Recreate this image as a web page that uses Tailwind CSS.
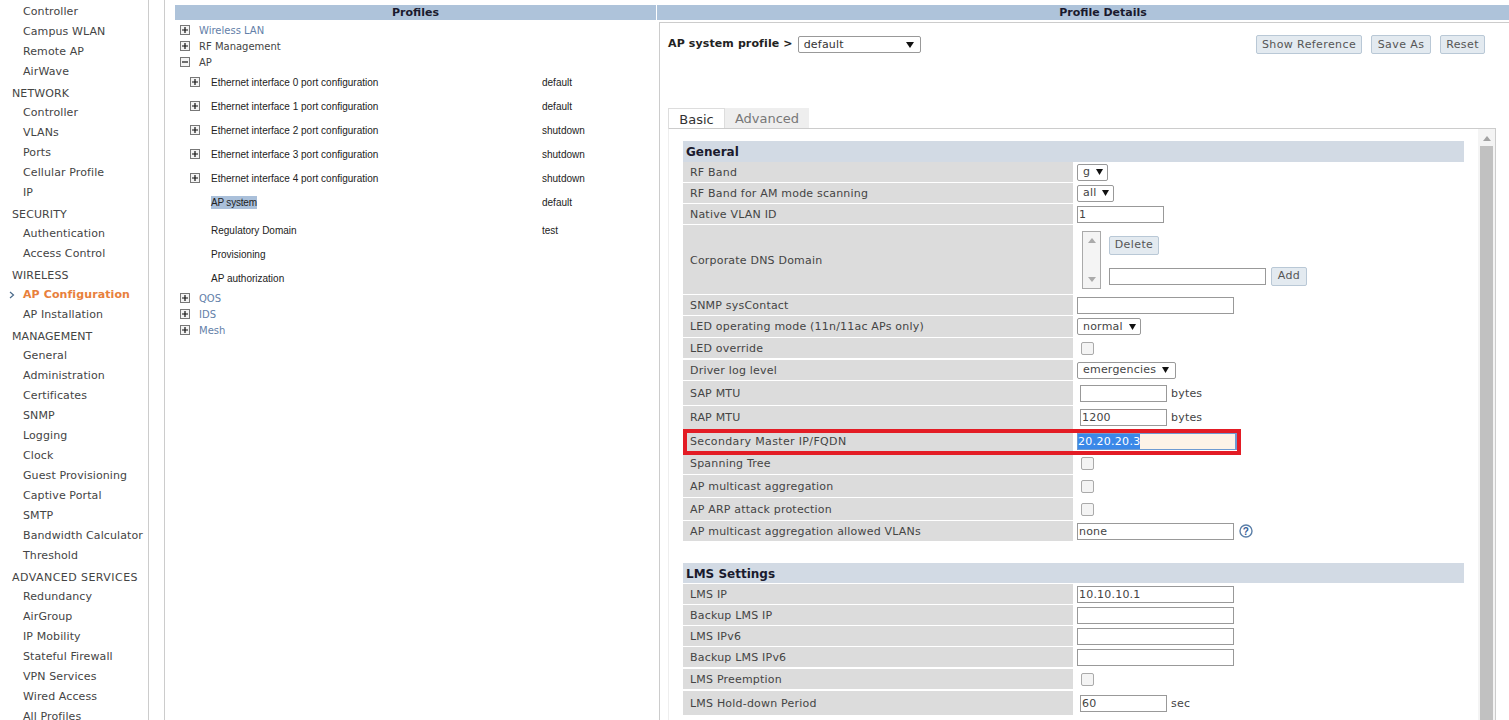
<!DOCTYPE html>
<html lang="en">
<head>
    <meta charset="UTF-8">
    <title>AP Configuration</title>
    <script src="https://cdn.jsdelivr.net/npm/@tailwindcss/browser@4"></script>
</head>
<body class="bg-white overflow-hidden font-['DejaVu_Sans',sans-serif] text-[11px] text-[#333]">
<div class="flex h-[720px] w-[1509px] overflow-hidden">

    <!-- Left navigation -->
    <nav class="w-[149px] shrink-0 border-r border-[#ccc] pt-[2px] pl-3 text-[#444] tracking-[.1px]">
        <div class="pl-[11px]">
            <div class="h-5 leading-5">Controller</div>
            <div class="h-5 leading-5">Campus WLAN</div>
            <div class="h-5 leading-5">Remote AP</div>
            <div class="h-5 leading-5">AirWave</div>
        </div>
        <div class="h-[21px] pt-[2px] leading-5">NETWORK</div>
        <div class="pl-[11px]">
            <div class="h-5 leading-5">Controller</div>
            <div class="h-5 leading-5">VLANs</div>
            <div class="h-5 leading-5">Ports</div>
            <div class="h-5 leading-5">Cellular Profile</div>
            <div class="h-5 leading-5">IP</div>
        </div>
        <div class="h-[21px] pt-[2px] leading-5">SECURITY</div>
        <div class="pl-[11px]">
            <div class="h-5 leading-5">Authentication</div>
            <div class="h-5 leading-5">Access Control</div>
        </div>
        <div class="h-[21px] pt-[2px] leading-5">WIRELESS</div>
        <div class="pl-[11px]">
            <div class="relative h-5 leading-5 font-bold text-[#e8803c]">
                <svg class="absolute left-[-14px] top-[6px]" width="6" height="8" viewBox="0 0 6 8" fill="none" stroke="#4a6a8a" stroke-width="1.2"><path d="M1 1l3.5 3L1 7"/></svg>
                AP Configuration
            </div>
            <div class="h-5 leading-5">AP Installation</div>
        </div>
        <div class="h-[21px] pt-[2px] leading-5">MANAGEMENT</div>
        <div class="pl-[11px]">
            <div class="h-5 leading-5">General</div>
            <div class="h-5 leading-5">Administration</div>
            <div class="h-5 leading-5">Certificates</div>
            <div class="h-5 leading-5">SNMP</div>
            <div class="h-5 leading-5">Logging</div>
            <div class="h-5 leading-5">Clock</div>
            <div class="h-5 leading-5">Guest Provisioning</div>
            <div class="h-5 leading-5">Captive Portal</div>
            <div class="h-5 leading-5">SMTP</div>
            <div class="h-5 leading-5">Bandwidth Calculator</div>
            <div class="h-5 leading-5">Threshold</div>
        </div>
        <div class="h-[21px] pt-[2px] leading-5 tracking-[.45px]">ADVANCED SERVICES</div>
        <div class="pl-[11px]">
            <div class="h-5 leading-5">Redundancy</div>
            <div class="h-5 leading-5">AirGroup</div>
            <div class="h-5 leading-5">IP Mobility</div>
            <div class="h-5 leading-5">Stateful Firewall</div>
            <div class="h-5 leading-5">VPN Services</div>
            <div class="h-5 leading-5">Wired Access</div>
            <div class="h-5 leading-5">All Profiles</div>
        </div>
    </nav>
    <div class="w-4 shrink-0 border-r border-[#ccc]"></div>

    <main class="flex flex-1 pl-[10px] pt-[5px] min-w-0">

        <!-- Profiles tree -->
        <section class="w-[481px] shrink-0 mr-px">
            <h2 class="h-[15px] bg-[#aec3da] text-center text-[11px] leading-[16px] font-bold text-[#1a1a2e]">Profiles</h2>
            <div class="pt-[2px] pl-[5px] text-[10px] text-[#444]">
                <div class="flex items-center h-4"><svg class="mr-[9px]" width="10" height="10" viewBox="0 0 10 10"><rect x=".5" y=".5" width="9" height="9" fill="#f4f4f4" stroke="#777"/><path d="M2 5h6M5 2v6" stroke="#111" stroke-width="1.2"/></svg><span class="text-[#6380a8]">Wireless LAN</span></div>
                <div class="flex items-center h-4"><svg class="mr-[9px]" width="10" height="10" viewBox="0 0 10 10"><rect x=".5" y=".5" width="9" height="9" fill="#f4f4f4" stroke="#777"/><path d="M2 5h6M5 2v6" stroke="#111" stroke-width="1.2"/></svg>RF Management</div>
                <div class="flex items-center h-4"><svg class="mr-[9px]" width="10" height="10" viewBox="0 0 10 10"><rect x=".5" y=".5" width="9" height="9" fill="#f4f4f4" stroke="#777"/><path d="M2 5h6" stroke="#111" stroke-width="1.2"/></svg>AP</div>

                <div class="pl-[10px] font-['Liberation_Sans',sans-serif] text-[10px] text-[#222]">
                    <div class="flex items-center h-6"><svg class="mr-[11px]" width="10" height="10" viewBox="0 0 10 10"><rect x=".5" y=".5" width="9" height="9" fill="#f4f4f4" stroke="#777"/><path d="M2 5h6M5 2v6" stroke="#111" stroke-width="1.2"/></svg><span class="w-[331px]">Ethernet interface 0 port configuration</span><span>default</span></div>
                    <div class="flex items-center h-6"><svg class="mr-[11px]" width="10" height="10" viewBox="0 0 10 10"><rect x=".5" y=".5" width="9" height="9" fill="#f4f4f4" stroke="#777"/><path d="M2 5h6M5 2v6" stroke="#111" stroke-width="1.2"/></svg><span class="w-[331px]">Ethernet interface 1 port configuration</span><span>default</span></div>
                    <div class="flex items-center h-6"><svg class="mr-[11px]" width="10" height="10" viewBox="0 0 10 10"><rect x=".5" y=".5" width="9" height="9" fill="#f4f4f4" stroke="#777"/><path d="M2 5h6M5 2v6" stroke="#111" stroke-width="1.2"/></svg><span class="w-[331px]">Ethernet interface 2 port configuration</span><span>shutdown</span></div>
                    <div class="flex items-center h-6"><svg class="mr-[11px]" width="10" height="10" viewBox="0 0 10 10"><rect x=".5" y=".5" width="9" height="9" fill="#f4f4f4" stroke="#777"/><path d="M2 5h6M5 2v6" stroke="#111" stroke-width="1.2"/></svg><span class="w-[331px]">Ethernet interface 3 port configuration</span><span>shutdown</span></div>
                    <div class="flex items-center h-6"><svg class="mr-[11px]" width="10" height="10" viewBox="0 0 10 10"><rect x=".5" y=".5" width="9" height="9" fill="#f4f4f4" stroke="#777"/><path d="M2 5h6M5 2v6" stroke="#111" stroke-width="1.2"/></svg><span class="w-[331px]">Ethernet interface 4 port configuration</span><span>shutdown</span></div>
                    <div class="flex items-center h-6 pl-[21px]"><span class="w-[331px]"><span class="bg-[#aac0da] py-px tracking-[-.2px]">AP system</span></span><span>default</span></div>
                    <div class="flex items-center h-6 pl-[21px] mt-1"><span class="w-[331px]">Regulatory Domain</span><span>test</span></div>
                    <div class="flex items-center h-6 pl-[21px]">Provisioning</div>
                    <div class="flex items-center h-6 pl-[21px]">AP authorization</div>
                </div>

                <div class="flex items-center h-4"><svg class="mr-[9px]" width="10" height="10" viewBox="0 0 10 10"><rect x=".5" y=".5" width="9" height="9" fill="#f4f4f4" stroke="#777"/><path d="M2 5h6M5 2v6" stroke="#111" stroke-width="1.2"/></svg><span class="text-[#6380a8]">QOS</span></div>
                <div class="flex items-center h-4"><svg class="mr-[9px]" width="10" height="10" viewBox="0 0 10 10"><rect x=".5" y=".5" width="9" height="9" fill="#f4f4f4" stroke="#777"/><path d="M2 5h6M5 2v6" stroke="#111" stroke-width="1.2"/></svg><span class="text-[#6380a8]">IDS</span></div>
                <div class="flex items-center h-4"><svg class="mr-[9px]" width="10" height="10" viewBox="0 0 10 10"><rect x=".5" y=".5" width="9" height="9" fill="#f4f4f4" stroke="#777"/><path d="M2 5h6M5 2v6" stroke="#111" stroke-width="1.2"/></svg><span class="text-[#6380a8]">Mesh</span></div>
            </div>
        </section>

        <!-- Profile details -->
        <section class="flex-1 min-w-0 flex flex-col">
            <h2 class="h-[15px] shrink-0 bg-[#aec3da] pl-10 text-center text-[11px] leading-[16px] font-bold text-[#1a1a2e]">Profile Details</h2>
            <div class="flex-1 mt-[2px] ml-[2px] border-t border-l border-[#ccc] pl-2 min-h-0">

                <div class="flex items-start justify-between h-[85px] pt-[13px] pr-6">
                    <div class="flex items-center">
                        <span class="font-bold text-[#222] mr-[5px] tracking-[.12px]">AP system profile &gt;</span>
                        <div class="flex items-center justify-between w-[123px] h-[17px] border border-[#999] rounded-[2px] pl-[5px] pr-[6px] tracking-[.2px]"><span class="pt-px">default</span><svg width="8" height="6" viewBox="0 0 8 6"><path d="M0 0h8L4 6z" fill="#111"/></svg></div>
                    </div>
                    <div class="flex gap-[9px] -mt-px">
                        <button class="h-[19px] w-[106px] pt-px bg-[#e3eaf0] border border-[#b9c8d6] rounded-[2px] text-[#555] tracking-[.4px]">Show Reference</button>
                        <button class="h-[19px] w-[60px] pt-px bg-[#e3eaf0] border border-[#b9c8d6] rounded-[2px] text-[#555] tracking-[.4px]">Save As</button>
                        <button class="h-[19px] w-[45px] pt-px bg-[#e3eaf0] border border-[#b9c8d6] rounded-[2px] text-[#555] tracking-[.4px]">Reset</button>
                    </div>
                </div>

                <div class="flex text-[13px]">
                    <div class="w-[57px] h-[20px] leading-[22px] text-center border-t border-l border-r border-[#ddd] text-[#333]">Basic</div>
                    <div class="w-[84px] h-[20px] leading-[22px] text-center bg-[#eee] text-[#777]">Advanced</div>
                </div>

                <div class="flex w-[828px] h-[600px] border-t border-l border-r border-[#ccc] border-l-[#eee]">
                    <div class="flex-1 pl-[14px] pt-3 text-[#444] tracking-[.2px]">
                        <h3 class="w-[781px] h-[21px] pl-[3px] bg-[#d2dae4] font-bold text-[12px] tracking-normal leading-[23px] text-[#1a1a2e]">General</h3>
                        <div class="w-[781px] flex flex-col">
                            <div class="flex h-5 mb-px"><div class="flex items-center w-[390px] bg-[#dcdcdc] pl-[7px] pt-[2px]">RF Band</div><div class="pl-[4px] flex items-center"><div class="flex items-center w-[31px] h-[17px] border border-[#999] rounded-[2px] pl-[5px] gap-[6px]"><span class="pt-px">g</span><svg width="7" height="6" viewBox="0 0 7 6"><path d="M0 0h7L3.5 6z" fill="#111"/></svg></div></div></div>
                            <div class="flex h-5 mb-px"><div class="flex items-center w-[390px] bg-[#dcdcdc] pl-[7px] pt-[2px]">RF Band for AM mode scanning</div><div class="pl-[4px] flex items-center"><div class="flex items-center w-[37px] h-[17px] border border-[#999] rounded-[2px] pl-[5px] gap-[6px]"><span class="pt-px">all</span><svg width="7" height="6" viewBox="0 0 7 6"><path d="M0 0h7L3.5 6z" fill="#111"/></svg></div></div></div>
                            <div class="flex h-5 mb-px"><div class="flex items-center w-[390px] bg-[#dcdcdc] pl-[7px] pt-[2px]">Native VLAN ID</div><div class="pl-[4px] flex items-center"><input class="w-[87px] h-[17px] border border-[#999] px-px outline-none" value="1"></div></div>
                            <div class="flex h-[69px] mb-px"><div class="flex items-center w-[390px] bg-[#dcdcdc] pl-[7px] pt-1">Corporate DNS Domain</div>
                                <div class="flex pl-[9px] pt-[6px]">
                                    <div class="flex flex-col items-center justify-between w-[19px] h-[58px] border border-[#aaa] bg-[#f4f4f4] py-[6px]"><svg width="8" height="5" viewBox="0 0 8 5"><path d="M4 0l4 5H0z" fill="#aaa"/></svg><svg width="8" height="5" viewBox="0 0 8 5"><path d="M0 0h8L4 5z" fill="#aaa"/></svg></div>
                                    <div class="pl-2">
                                        <button class="block h-[19px] w-[50px] mt-[5px] bg-[#e3eaf0] border border-[#b9c8d6] rounded-[2px] text-[#555] tracking-[.4px]">Delete</button>
                                        <div class="flex items-center gap-[4px] mt-[12px]"><input class="w-[157px] h-[17px] border border-[#999] outline-none"><button class="h-[19px] w-[36px] ml-px bg-[#e3eaf0] border border-[#b9c8d6] rounded-[2px] text-[#555] tracking-[.4px]">Add</button></div>
                                    </div>
                                </div>
                            </div>
                            <div class="flex h-5 mb-px"><div class="flex items-center w-[390px] bg-[#dcdcdc] pl-[7px] pt-[2px]">SNMP sysContact</div><div class="pl-[4px] flex items-center"><input class="w-[157px] h-[17px] border border-[#999] outline-none"></div></div>
                            <div class="flex h-[21px] mb-px"><div class="flex items-center w-[390px] bg-[#dcdcdc] pl-[7px] pt-[2px]">LED operating mode (11n/11ac APs only)</div><div class="pl-[4px] flex items-center"><div class="flex items-center w-[64px] h-[17px] border border-[#999] rounded-[2px] pl-[5px] gap-[6px]"><span class="pt-px">normal</span><svg width="7" height="6" viewBox="0 0 7 6"><path d="M0 0h7L3.5 6z" fill="#111"/></svg></div></div></div>
                            <div class="flex h-5 mb-[2px]"><div class="flex items-center w-[390px] bg-[#dcdcdc] pl-[7px] pt-[2px]">LED override</div><div class="pl-[8px] flex items-center"><div class="w-[13px] h-[13px] border border-[#aaa] rounded-[2px] bg-[#f4f4f4]"></div></div></div>
                            <div class="flex h-5 mb-px"><div class="flex items-center w-[390px] bg-[#dcdcdc] pl-[7px] pt-[2px]">Driver log level</div><div class="pl-[4px] flex items-center"><div class="flex items-center w-[99px] h-[17px] border border-[#999] rounded-[2px] pl-[5px] gap-[6px]"><span class="pt-px">emergencies</span><svg width="7" height="6" viewBox="0 0 7 6"><path d="M0 0h7L3.5 6z" fill="#111"/></svg></div></div></div>
                            <div class="flex h-6 mb-px"><div class="flex items-center w-[390px] bg-[#dcdcdc] pl-[7px] pt-[2px]">SAP MTU</div><div class="pl-[7px] flex items-center gap-[4px]"><input class="w-[87px] h-[17px] border border-[#999] outline-none"><span class="pt-[2px]">bytes</span></div></div>
                            <div class="flex h-[23px] mb-px"><div class="flex items-center w-[390px] bg-[#dcdcdc] pl-[7px] pt-[2px]">RAP MTU</div><div class="pl-[7px] flex items-center gap-[4px]"><input class="w-[87px] h-[17px] border border-[#999] px-px outline-none" value="1200"><span class="pt-[2px]">bytes</span></div></div>

                            <!-- highlighted row, red frame lies over it -->
                            <div class="relative flex h-[22px] mb-px">
                                <div class="flex items-center w-[390px] bg-[#dcdcdc] pl-[7px] pt-[2px] tracking-[.35px]">Secondary Master IP/FQDN</div>
                                <div class="pl-[4px] flex items-center"><div class="w-[160px] h-[17px] border border-[#6f9bd1] border-r-2 bg-[#fdf3e7] leading-[15px]"><span class="inline-block h-[15px] bg-[#3a88e8] text-white tracking-[.3px]">20.20.20.3</span></div></div>
                                <div class="absolute left-0 -top-px w-[558px] h-[26px] border-4 border-[#e31c25]"></div>
                            </div>

                            <div class="flex h-[21px] mb-px"><div class="flex items-center w-[390px] bg-[#dcdcdc] pl-[7px] pt-[2px]">Spanning Tree</div><div class="pl-[8px] flex items-center"><div class="w-[13px] h-[13px] border border-[#aaa] rounded-[2px] bg-[#f4f4f4]"></div></div></div>
                            <div class="flex h-[22px] mb-px"><div class="flex items-center w-[390px] bg-[#dcdcdc] pl-[7px] pt-[2px]">AP multicast aggregation</div><div class="pl-[8px] flex items-center"><div class="w-[13px] h-[13px] border border-[#aaa] rounded-[2px] bg-[#f4f4f4]"></div></div></div>
                            <div class="flex h-[22px] mb-px"><div class="flex items-center w-[390px] bg-[#dcdcdc] pl-[7px] pt-[2px]">AP ARP attack protection</div><div class="pl-[8px] flex items-center"><div class="w-[13px] h-[13px] border border-[#aaa] rounded-[2px] bg-[#f4f4f4]"></div></div></div>
                            <div class="flex h-5"><div class="flex items-center w-[390px] bg-[#dcdcdc] pl-[7px] pt-[2px]">AP multicast aggregation allowed VLANs</div><div class="pl-[4px] flex items-center gap-[5px]"><input class="w-[157px] h-[17px] border border-[#999] px-px outline-none" value="none"><svg width="14" height="14" viewBox="0 0 14 14"><circle cx="7" cy="7" r="6" fill="#fff" stroke="#5b7fa8" stroke-width="1.4"/><text x="7" y="10.5" text-anchor="middle" font-size="10" font-weight="700" fill="#35609a" font-family="Liberation Sans">?</text></svg></div></div>
                        </div>

                        <h3 class="w-[781px] h-5 mt-[22px] pl-[3px] bg-[#d2dae4] font-bold text-[12px] tracking-normal leading-[22px] text-[#1a1a2e]">LMS Settings</h3>
                        <div class="w-[781px] flex flex-col pt-px">
                            <div class="flex h-5 mb-px"><div class="flex items-center w-[390px] bg-[#dcdcdc] pl-[7px] pt-[2px]">LMS IP</div><div class="pl-[4px] flex items-center"><input class="w-[157px] h-[17px] border border-[#999] px-px outline-none" value="10.10.10.1"></div></div>
                            <div class="flex h-5 mb-px"><div class="flex items-center w-[390px] bg-[#dcdcdc] pl-[7px] pt-[2px]">Backup LMS IP</div><div class="pl-[4px] flex items-center"><input class="w-[157px] h-[17px] border border-[#999] outline-none"></div></div>
                            <div class="flex h-5 mb-px"><div class="flex items-center w-[390px] bg-[#dcdcdc] pl-[7px] pt-[2px]">LMS IPv6</div><div class="pl-[4px] flex items-center"><input class="w-[157px] h-[17px] border border-[#999] outline-none"></div></div>
                            <div class="flex h-5 mb-[2px]"><div class="flex items-center w-[390px] bg-[#dcdcdc] pl-[7px] pt-[2px]">Backup LMS IPv6</div><div class="pl-[4px] flex items-center"><input class="w-[157px] h-[17px] border border-[#999] outline-none"></div></div>
                            <div class="flex h-5 mb-[2px]"><div class="flex items-center w-[390px] bg-[#dcdcdc] pl-[7px] pt-[2px]">LMS Preemption</div><div class="pl-[8px] flex items-center"><div class="w-[13px] h-[13px] border border-[#aaa] rounded-[2px] bg-[#f4f4f4]"></div></div></div>
                            <div class="flex h-6"><div class="flex items-center w-[390px] bg-[#dcdcdc] pl-[7px] pt-[2px]">LMS Hold-down Period</div><div class="pl-[7px] flex items-center gap-[4px]"><input class="w-[87px] h-[17px] border border-[#999] px-px outline-none" value="60"><span class="pt-[2px]">sec</span></div></div>
                        </div>
                    </div>

                    <!-- scrollbar -->
                    <div class="w-[17px] shrink-0 bg-[#f4f4f4] flex flex-col items-center pt-[7px]">
                        <svg width="8" height="5" viewBox="0 0 8 5"><path d="M4 0l4 5H0z" fill="#a3a3a3"/></svg>
                        <div class="w-[13px] flex-1 bg-[#c1c1c1] mt-[5px]"></div>
                    </div>
                </div>
            </div>
        </section>
    </main>
</div>
</body>
</html>
